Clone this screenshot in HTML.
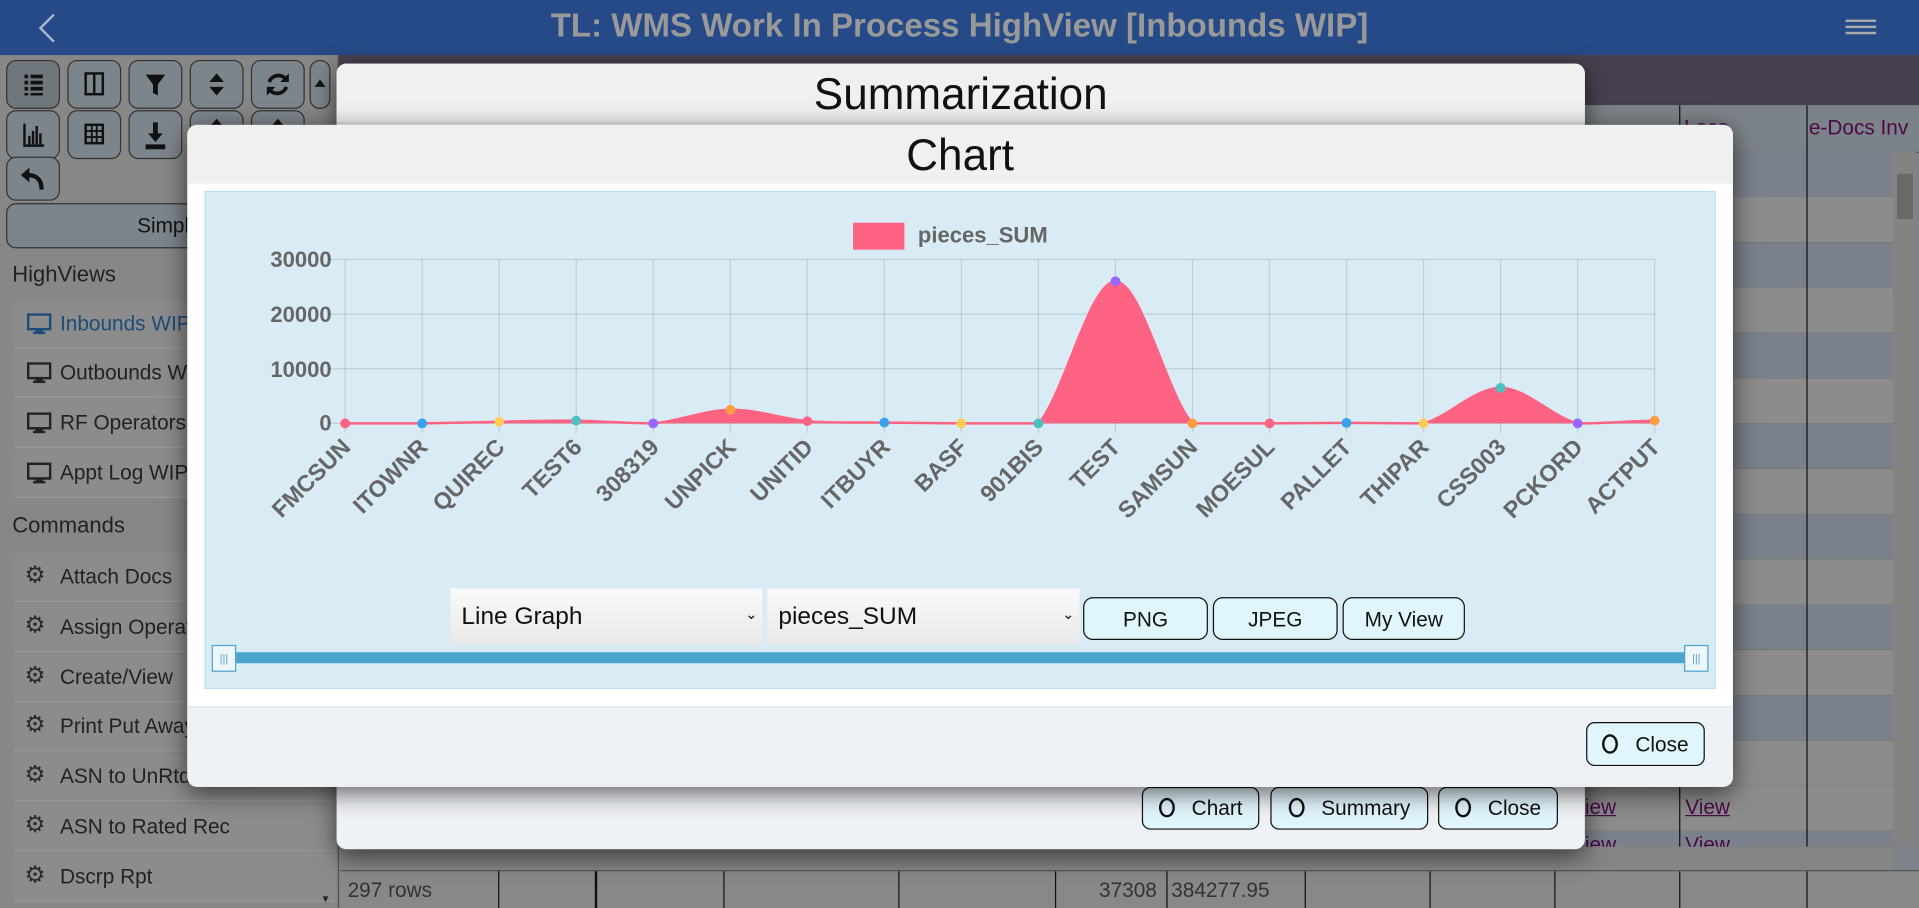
<!DOCTYPE html>
<html><head><meta charset="utf-8">
<style>
html,body{margin:0;padding:0;width:1919px;height:908px;overflow:hidden;background:#888;}
#w{position:absolute;left:0;top:0;width:1568px;height:742px;transform:scale(1.22385,1.2237);transform-origin:0 0;font-family:"Liberation Sans",sans-serif;overflow:hidden;background:#878787;}
.abs{position:absolute;}
.hdr{left:0;top:0;width:1568px;height:45px;background:#254a87;}
.title{left:0;width:1568px;top:6px;text-align:center;font-size:27px;color:#999;font-weight:bold;letter-spacing:0px;}
.tb{position:absolute;width:42px;height:38px;border:1px solid #333;border-radius:8px;background:#7d858c;}
.side-i{position:absolute;left:12px;width:262px;height:39px;background:#8c8c8c;border-bottom:1px solid #9a9a9a;font-size:17px;color:#222;}
.side-i .t{position:absolute;left:37px;top:10px;white-space:nowrap;}
.side-i .gear{position:absolute;left:8px;top:7px;font-size:19px;color:#2b2b2b;}
.sec{position:absolute;left:10px;font-size:18px;color:#222;}
.row{position:absolute;left:1270px;width:277px;height:37px;border-bottom:1px solid #111;}
.btn{position:absolute;background:#e1f5fd;border:1px solid #111;border-radius:7px;font-size:17px;color:#111;text-align:center;box-sizing:border-box;}
.circ{display:inline-block;width:13px;height:16px;border:2.5px solid #111;border-radius:50%;vertical-align:-2px;margin-right:14px;box-sizing:border-box;}
.xl{position:absolute;font-size:19px;font-weight:bold;color:#666;transform:rotate(-45deg);transform-origin:100% 50%;white-space:nowrap;text-align:right;}
.yl{position:absolute;font-size:18px;font-weight:bold;color:#666;text-align:right;width:60px;}
</style></head><body>
<div id="w">
<div class="abs hdr"></div>
<svg class="abs" style="left:28px;top:10px" width="20" height="26"><path d="M16 2 L5 13 L16 24" stroke="#aab6cc" stroke-width="2" fill="none"/></svg>
<div class="abs title">TL: WMS Work In Process HighView [Inbounds WIP]</div>
<div class="abs" style="left:1508px;top:16px;width:25px;height:2px;background:#aaa;box-shadow:0 5px 0 #aaa,0 10px 0 #aaa"></div>

<div class="abs" style="left:276px;top:45px;width:1292px;height:697px;background:#7e828a"></div>
<div class="abs" style="left:276px;top:45px;width:1292px;height:41px;background:#48404f"></div>
<div class="abs" style="left:1270px;top:86px;width:298px;height:38px;background:#7c8388;border-bottom:1px solid #555"></div>
<div class="abs" style="left:1478px;top:95px;font-size:17px;color:#4a0a4a">e-Docs Inv</div>
<div class="abs" style="left:1376px;top:95px;font-size:17px;color:#4a0a4a">Loca</div>
<div class="row" style="top:124px;background:#7a818a"></div>
<div class="row" style="top:161px;background:#8c8c8c"></div>
<div class="row" style="top:198px;background:#7a818a"></div>
<div class="row" style="top:235px;background:#8c8c8c"></div>
<div class="row" style="top:272px;background:#7a818a"></div>
<div class="row" style="top:309px;background:#8c8c8c"></div>
<div class="row" style="top:346px;background:#7a818a"></div>
<div class="row" style="top:383px;background:#8c8c8c"></div>
<div class="row" style="top:420px;background:#7a818a"></div>
<div class="row" style="top:457px;background:#8c8c8c"></div>
<div class="row" style="top:494px;background:#7a818a"></div>
<div class="row" style="top:531px;background:#8c8c8c"></div>
<div class="row" style="top:568px;background:#7a818a"></div>
<div class="row" style="top:605px;background:#8c8c8c"></div>
<div class="row" style="top:642px;background:#8c8c8c"></div>
<div class="row" style="top:679px;height:13px;background:#7a818a;border:0"></div>
<div class="abs" style="left:1372px;top:86px;width:1px;height:606px;background:#111"></div>
<div class="abs" style="left:1476px;top:86px;width:1px;height:606px;background:#111"></div>
<div class="abs" style="left:1377px;top:650px;font-size:17px;color:#4a0a4a;text-decoration:underline">View</div>
<div class="abs" style="left:1377px;top:681px;font-size:17px;color:#4a0a4a;text-decoration:underline">View</div>
<div class="abs" style="left:1295px;top:650px;font-size:17px;color:#4a0a4a;text-decoration:underline">iew</div>
<div class="abs" style="left:1295px;top:681px;font-size:17px;color:#4a0a4a;text-decoration:underline">iew</div>
<div class="abs" style="left:1547px;top:124px;width:19px;height:568px;background:#838383"></div>
<div class="abs" style="left:1550px;top:142px;width:13px;height:37px;background:#6a6a6a"></div>
<div class="abs" style="left:278px;top:692px;width:1269px;height:19px;background:#858585"></div>
<div class="abs" style="left:278px;top:711px;width:1290px;height:31px;background:#888;border-top:1px solid #555"></div>
<div class="abs" style="left:284px;top:718px;font-size:17px;color:#333">297 rows</div>
<div class="abs" style="left:407px;top:712px;width:1px;height:30px;background:#111"></div>
<div class="abs" style="left:486px;top:712px;width:2px;height:30px;background:#111"></div>
<div class="abs" style="left:591px;top:712px;width:1px;height:30px;background:#111"></div>
<div class="abs" style="left:734px;top:712px;width:1px;height:30px;background:#111"></div>
<div class="abs" style="left:862px;top:712px;width:1px;height:30px;background:#111"></div>
<div class="abs" style="left:953px;top:712px;width:1px;height:30px;background:#111"></div>
<div class="abs" style="left:1066px;top:712px;width:1px;height:30px;background:#111"></div>
<div class="abs" style="left:1168px;top:712px;width:1px;height:30px;background:#111"></div>
<div class="abs" style="left:1270px;top:712px;width:1px;height:30px;background:#111"></div>
<div class="abs" style="left:1372px;top:712px;width:1px;height:30px;background:#111"></div>
<div class="abs" style="left:1476px;top:712px;width:1px;height:30px;background:#111"></div>
<div class="abs" style="left:898px;top:718px;font-size:17px;color:#333">37308</div>
<div class="abs" style="left:957px;top:718px;font-size:17px;color:#333">384277.95</div>

<div class="abs" style="left:276px;top:45px;width:1px;height:697px;background:#555"></div>
<div class="tb" style="left:5px;top:49px;background:#6f767c"><svg width="42" height="38"><g fill="#111"><rect x="14" y="11" width="3" height="3"/><rect x="19" y="11" width="10" height="3"/><rect x="14" y="16" width="3" height="3"/><rect x="19" y="16" width="10" height="3"/><rect x="14" y="21" width="3" height="3"/><rect x="19" y="21" width="10" height="3"/><rect x="14" y="26" width="3" height="2"/><rect x="19" y="26" width="10" height="2"/></g></svg></div>
<div class="tb" style="left:55px;top:49px"><svg width="42" height="38"><rect x="14" y="10" width="14" height="17" fill="none" stroke="#111" stroke-width="2"/><rect x="20" y="10" width="2" height="17" fill="#111"/></svg></div>
<div class="tb" style="left:105px;top:49px"><svg width="42" height="38"><path d="M13 11 H29 L23 19 V28 L19 26 V19 Z" fill="#111"/></svg></div>
<div class="tb" style="left:155px;top:49px"><svg width="42" height="38"><path d="M15 17 L21 10 L27 17 Z M15 21 L21 28 L27 21 Z" fill="#111"/></svg></div>
<div class="tb" style="left:205px;top:49px"><svg width="42" height="38"><path d="M28 15 A8 8 0 0 0 14 17 M14 23 A8 8 0 0 0 28 21" stroke="#111" stroke-width="3" fill="none"/><path d="M30 10 V17 H23 Z M12 28 V21 H19 Z" fill="#111"/></svg></div>
<div class="tb" style="left:253px;top:49px;width:15px"><svg width="15" height="38"><path d="M3 21 L7.5 15 L12 21 Z" fill="#111"/></svg></div>
<div class="tb" style="left:5px;top:90px"><svg width="42" height="38"><path d="M14 10 V28 H30" stroke="#111" stroke-width="2" fill="none"/><g fill="#111"><rect x="17" y="20" width="2" height="7"/><rect x="20" y="16" width="2" height="11"/><rect x="23" y="12" width="2" height="15"/><rect x="26" y="18" width="2" height="9"/></g></svg></div>
<div class="tb" style="left:55px;top:90px"><svg width="42" height="38"><rect x="14" y="11" width="14" height="15" fill="none" stroke="#111" stroke-width="2"/><path d="M14 16 H28 M14 21 H28 M19 11 V26 M23 11 V26" stroke="#111" stroke-width="1.5"/></svg></div>
<div class="tb" style="left:105px;top:90px"><svg width="42" height="38"><path d="M19 9 H23 V18 H27 L21 25 L15 18 H19 Z" fill="#111"/><rect x="13" y="27" width="16" height="4" fill="#111"/></svg></div>
<div class="tb" style="left:155px;top:90px"><svg width="42" height="38"><path d="M15 13 L21 6 L27 13 Z" fill="#111"/></svg></div>
<div class="tb" style="left:205px;top:90px"><svg width="42" height="38"><path d="M15 13 L21 6 L27 13 Z" fill="#111"/></svg></div>
<div class="tb" style="left:5px;top:128px;height:34px"><svg width="42" height="34"><path d="M28 26 C28 16 22 14 16 14" stroke="#111" stroke-width="3.5" fill="none"/><path d="M11 14 L18 8 V20 Z" fill="#111"/></svg></div>
<div class="tb" style="left:5px;top:166px;width:300px;height:35px;"><span style="position:absolute;left:106px;top:8px;font-size:17px;color:#111">Simplified</span></div>
<div class="sec" style="top:214px">HighViews</div>
<div class="side-i" style="top:245px"><svg class="abs" style="left:10px;top:11px" width="20" height="18"><rect x="1" y="1" width="18" height="12" fill="none" stroke="#1e4c7a" stroke-width="2"/><rect x="7" y="13" width="6" height="3" fill="#1e4c7a"/><rect x="5" y="15" width="10" height="2" fill="#1e4c7a"/></svg><span class="t" style="color:#1e4c7a">Inbounds WIP</span></div>
<div class="side-i" style="top:285px"><svg class="abs" style="left:10px;top:11px" width="20" height="18"><rect x="1" y="1" width="18" height="12" fill="none" stroke="#222" stroke-width="2"/><rect x="7" y="13" width="6" height="3" fill="#222"/><rect x="5" y="15" width="10" height="2" fill="#222"/></svg><span class="t">Outbounds WIP</span></div>
<div class="side-i" style="top:326px"><svg class="abs" style="left:10px;top:11px" width="20" height="18"><rect x="1" y="1" width="18" height="12" fill="none" stroke="#222" stroke-width="2"/><rect x="7" y="13" width="6" height="3" fill="#222"/><rect x="5" y="15" width="10" height="2" fill="#222"/></svg><span class="t">RF Operators</span></div>
<div class="side-i" style="top:367px"><svg class="abs" style="left:10px;top:11px" width="20" height="18"><rect x="1" y="1" width="18" height="12" fill="none" stroke="#222" stroke-width="2"/><rect x="7" y="13" width="6" height="3" fill="#222"/><rect x="5" y="15" width="10" height="2" fill="#222"/></svg><span class="t">Appt Log WIP</span></div>
<div class="sec" style="top:419px">Commands</div>
<div class="side-i" style="top:452px"><div class="gear">⚙</div><span class="t">Attach Docs</span></div>
<div class="side-i" style="top:493px"><div class="gear">⚙</div><span class="t">Assign Operator</span></div>
<div class="side-i" style="top:534px"><div class="gear">⚙</div><span class="t">Create/View</span></div>
<div class="side-i" style="top:574px"><div class="gear">⚙</div><span class="t">Print Put Away</span></div>
<div class="side-i" style="top:615px"><div class="gear">⚙</div><span class="t">ASN to UnRtd</span></div>
<div class="side-i" style="top:656px"><div class="gear">⚙</div><span class="t">ASN to Rated Rec</span></div>
<div class="side-i" style="top:697px"><div class="gear">⚙</div><span class="t">Dscrp Rpt</span></div>
<div class="abs" style="left:262px;top:730px;font-size:8px;color:#222">▼</div>

<div class="abs" style="left:275px;top:52px;width:1020px;height:642px;background:#eef1f5;border-radius:8px;box-shadow:0 5px 20px rgba(0,0,0,.6);overflow:hidden">
 <div class="abs" style="left:0;top:0;width:1020px;height:48px;background:#f0f0f0;border-bottom:1px solid #ddd"></div>
 <div class="abs" style="left:0;top:4px;width:1020px;text-align:center;font-size:36px;color:#111">Summarization</div>
</div>
<div class="btn" style="left:933px;top:643px;width:96px;height:35px;padding-top:7px"><span class="circ"></span>Chart</div>
<div class="btn" style="left:1038px;top:643px;width:129px;height:35px;padding-top:7px"><span class="circ"></span>Summary</div>
<div class="btn" style="left:1175px;top:643px;width:98px;height:35px;padding-top:7px"><span class="circ"></span>Close</div>

<div class="abs" style="left:153px;top:102px;width:1263px;height:541px;background:#fff;border-radius:8px;box-shadow:0 5px 20px rgba(0,0,0,.6);overflow:hidden">
 <div class="abs" style="left:0;top:0;width:1263px;height:48px;background:#f0f0f0"></div>
 <div class="abs" style="left:0;top:4px;width:1263px;text-align:center;font-size:36px;color:#111">Chart</div>
 <div class="abs" style="left:0;top:475px;width:1263px;height:66px;background:#eef1f5;border-top:1px solid #dde3ea"></div>
</div>
<div class="btn" style="left:1296px;top:590px;width:97px;height:36px;padding-top:8px"><span class="circ"></span>Close</div>

<div class="abs" style="left:167px;top:156px;width:1233px;height:405px;background:#d9ecf5;border:1px solid #b8e0ef"></div>
<div class="abs" style="left:697px;top:182px;width:42px;height:22px;background:#ff6384"></div>
<div class="abs" style="left:750px;top:182px;font-size:18px;font-weight:bold;color:#666">pieces_SUM</div>
<div class="yl" style="left:211px;top:202px">30000</div>
<div class="yl" style="left:211px;top:247px">20000</div>
<div class="yl" style="left:211px;top:292px">10000</div>
<div class="yl" style="left:211px;top:336px">0</div>
<svg id="ch" class="abs" style="left:0;top:0" width="1568" height="742"></svg>
<div id="xl"></div>

<div class="abs" style="left:368px;top:481px;width:255px;height:46px;background:linear-gradient(#fafafa,#e8e8e8)"><span style="position:absolute;left:9px;top:12px;font-size:20px;color:#111">Line Graph</span><span style="position:absolute;right:4px;top:14px;font-size:12px;color:#111">⌄</span></div>
<div class="abs" style="left:627px;top:481px;width:255px;height:46px;background:linear-gradient(#fafafa,#e8e8e8)"><span style="position:absolute;left:9px;top:12px;font-size:20px;color:#111">pieces_SUM</span><span style="position:absolute;right:4px;top:14px;font-size:12px;color:#111">⌄</span></div>
<div class="btn" style="left:885px;top:488px;width:102px;height:35px;padding-top:8px;border-radius:8px">PNG</div>
<div class="btn" style="left:991px;top:488px;width:102px;height:35px;padding-top:8px;border-radius:8px">JPEG</div>
<div class="btn" style="left:1097px;top:488px;width:100px;height:35px;padding-top:8px;border-radius:8px">My View</div>
<div class="abs" style="left:180px;top:533px;width:1208px;height:9px;background:#4ba3cf"></div>
<div class="abs" style="left:173px;top:527px;width:18px;height:20px;background:#eef6fb;border:1px solid #4ba3cf;font-size:9px;color:#4ba3cf;text-align:center;line-height:20px">|||</div>
<div class="abs" style="left:1376px;top:527px;width:18px;height:20px;background:#eef6fb;border:1px solid #4ba3cf;font-size:9px;color:#4ba3cf;text-align:center;line-height:20px">|||</div>
</div>
<script>
var labs=["FMCSUN","ITOWNR","QUIREC","TEST6","308319","UNPICK","UNITID","ITBUYR","BASF","901BIS","TEST","SAMSUN","MOESUL","PALLET","THIPAR","CSS003","PCKORD","ACTPUT"];
var vals=[0,0,300,500,0,2500,400,150,0,0,26000,0,0,100,0,6500,0,500];
var cols=["#ff6384","#36a2eb","#ffcd56","#4bc0c0","#9966ff","#ff9f40"];
var x0=282,x1=1352,y0=346,ys=134/30000,dx=(x1-x0)/17;
var s='';
for(var i=0;i<4;i++){var y=y0-i*10000*ys;s+='<line x1="268" x2="'+x1+'" y1="'+y+'" y2="'+y+'" stroke="rgba(0,0,0,0.12)"/>';}
for(var i=0;i<18;i++){var x=x0+i*dx;s+='<line x1="'+x+'" x2="'+x+'" y1="212" y2="354" stroke="rgba(0,0,0,0.12)"/>';}
var P=vals.map(function(v,i){return [x0+i*dx,y0-v*ys];});
var d='M'+P[0][0]+' '+P[0][1];
for(var i=0;i<17;i++){var p0=P[Math.max(0,i-1)],p1=P[i],p2=P[i+1],p3=P[Math.min(17,i+2)],t=0.2;
var c1=[p1[0]+dx/3,p1[1]+(p2[1]-p0[1])*t],c2=[p2[0]-dx/3,p2[1]-(p3[1]-p1[1])*t];
c1[1]=Math.min(c1[1],y0);c2[1]=Math.min(c2[1],y0);
d+=' C'+c1[0]+' '+c1[1]+' '+c2[0]+' '+c2[1]+' '+p2[0]+' '+p2[1];}
s+='<path d="'+d+' L'+x1+' '+y0+' L'+x0+' '+y0+' Z" fill="#ff6384"/>';
s+='<path d="'+d+'" fill="none" stroke="#ff6384" stroke-width="2"/>';
P.forEach(function(p,i){s+='<circle cx="'+p[0]+'" cy="'+p[1]+'" r="4" fill="'+cols[i%6]+'"/>';});
document.getElementById('ch').innerHTML=s;
var h='';
labs.forEach(function(l,i){var x=x0+i*dx;h+='<div class="xl" style="left:'+(x-200+2)+'px;top:352px;width:200px">'+l+'</div>';});
document.getElementById('xl').innerHTML=h;
</script>
</body></html>
